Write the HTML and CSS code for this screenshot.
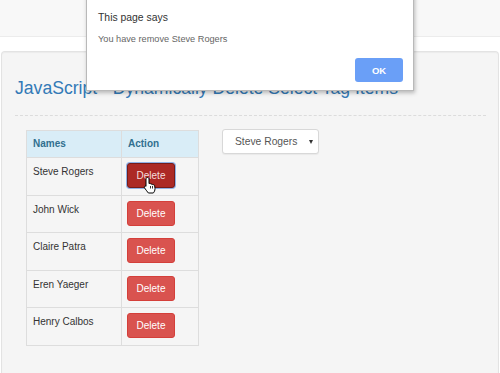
FILE: index.html
```html
<!DOCTYPE html>
<html>
<head>
<meta charset="utf-8">
<link rel="stylesheet" href="styles.css">
</head>
<body>
<div class="navbar"></div>
<div class="well">
  <h3 class="title">JavaScript - Dynamically Delete Select Tag Items</h3>
  <hr class="rule">
  <div class="content">
    <table class="names">
      <thead>
        <tr><th class="c1">Names</th><th class="c2">Action</th></tr>
      </thead>
      <tbody>
        <tr><td>Steve Rogers</td><td><span class="btn-wrap"><button class="btn active">Delete</button><svg class="cursor" width="14" height="17" viewBox="0 0 14 17"><path d="M4.5 0.5 C5.3 0.5 6 1.1 6 1.9 V6.6 L6.6 6.5 C7.3 6.4 7.8 6.8 8 7.2 C8.7 6.9 9.5 7.2 9.8 7.8 C10.6 7.5 11.5 7.9 11.7 8.8 L12 11.6 C12 13.6 11.2 15 10.3 16 H5.4 C4.4 14.8 3 13 1.6 11 C1.1 10.3 1.3 9.4 2 9.1 C2.5 8.9 2.9 9.1 3 9.4 V1.9 C3 1.1 3.7 0.5 4.5 0.5 Z" fill="#fff" stroke="#000" stroke-width="1" stroke-linejoin="round"/><path d="M7.5 9 V11.5 M9.5 9 V11.5" stroke="#000" stroke-width="0.8"/></svg></span></td></tr>
        <tr><td>John Wick</td><td><button class="btn">Delete</button></td></tr>
        <tr><td>Claire Patra</td><td><button class="btn">Delete</button></td></tr>
        <tr><td>Eren Yaeger</td><td><button class="btn">Delete</button></td></tr>
        <tr><td>Henry Calbos</td><td><button class="btn">Delete</button></td></tr>
      </tbody>
    </table>
    <div class="select">
      <span class="select-text">Steve Rogers</span>
      <span class="caret"></span>
    </div>
  </div>
</div>

<div class="dialog">
  <div class="dlg-title">This page says</div>
  <div class="dlg-msg">You have remove Steve Rogers</div>
  <div class="dlg-actions"><button class="ok">OK</button></div>
</div>
</body>
</html>
```

FILE: styles.css
```css
html, body {
  margin: 0;
  padding: 0;
  background: #fff;
  height: 373px;
  overflow: hidden;
  font-family: "Liberation Sans", Arial, sans-serif;
  font-size: 10px;
  color: #333;
}

.navbar {
  height: 36px;
  background: #f8f8f8;
  border-bottom: 1px solid #ececec;
}

.well {
  box-sizing: border-box;
  height: 322px;
  margin: 14px 1px 0 1px;
  background: #f5f5f5;
  border: 1px solid #e3e3e3;
  border-bottom: 0;
  border-radius: 4px 4px 0 0;
  padding: 27px 12px 0 13px;
  box-shadow: inset 0 1px 1px rgba(0,0,0,0.04);
}

.title {
  margin: 0;
  font-size: 17.6px;
  font-weight: normal;
  line-height: 19px;
  color: #337ab7;
}

.rule {
  margin: 17px 0 14px 0;
  border: 0;
  border-top: 1px dashed #dcdcdc;
  height: 0;
}

.content {
  display: flex;
  align-items: flex-start;
  padding-left: 11px;
  gap: 23px;
}

.names {
  border-collapse: collapse;
  width: 173px;
  border: 1px solid #dddddd;
}

.names th, .names td {
  border: 1px solid #dddddd;
  text-align: left;
  vertical-align: top;
  line-height: 14.3px;
}

.names th {
  background: #d9edf7;
  color: #31708f;
  font-weight: bold;
  padding: 6px;
  height: 14px;
}

.names .c1 { width: 82px; }

.names td {
  padding: 7px 5px 5px 6px;
  height: 24.5px;
  color: #333;
}

.names td + td {
  padding: 5px 5px 6px 5px;
}

.btn-wrap {
  position: relative;
  display: inline-block;
}

.btn {
  display: block;
  width: 48px;
  height: 25px;
  padding: 0;
  margin: 0;
  font-family: "Liberation Sans", Arial, sans-serif;
  font-size: 10px;
  color: #fff;
  background: #d9534f;
  border: 1px solid #d43f3a;
  border-radius: 3px;
}

.btn.active {
  background: #ac2925;
  border-color: #761c19;
  box-shadow: 0 0 0 1px #8fb0e6;
  color: #f4dede;
}

.cursor {
  position: absolute;
  left: 16px;
  top: 14px;
}

.select {
  display: flex;
  align-items: center;
  justify-content: space-between;
  width: 95px;
  height: 23px;
  margin-top: -1px;
  background: #fff;
  border: 1px solid #d8d8d8;
  border-radius: 3px;
  box-shadow: 0 1px 1px rgba(0,0,0,0.05);
}

.select-text {
  margin-left: 12px;
  color: #555;
  font-size: 10.3px;
}

.caret {
  width: 0;
  height: 0;
  margin-right: 5px;
  border-left: 2.5px solid transparent;
  border-right: 2.5px solid transparent;
  border-top: 4px solid #333;
}

.dialog {
  position: absolute;
  left: 86px;
  top: -10px;
  width: 326px;
  height: 99px;
  background: #fff;
  border: 1px solid #b9b9b9;
  box-shadow: 1px 2px 4px rgba(0,0,0,0.25);
  font-family: "Liberation Sans", Arial, sans-serif;
}

.dlg-title {
  margin: 20px 0 0 11px;
  font-size: 10.4px;
  line-height: 13px;
  color: #333;
}

.dlg-msg {
  margin: 9px 0 0 11px;
  font-size: 9.2px;
  line-height: 12px;
  color: #666;
}

.dlg-actions {
  display: flex;
  justify-content: flex-end;
  padding-right: 10px;
  margin-top: 13px;
}

.ok {
  width: 48px;
  height: 24px;
  border: 0;
  border-radius: 3px;
  background: #6a9ff7;
  color: #fff;
  font-family: "Liberation Sans", Arial, sans-serif;
  font-weight: bold;
  font-size: 9.5px;
  padding: 0;
}
```
